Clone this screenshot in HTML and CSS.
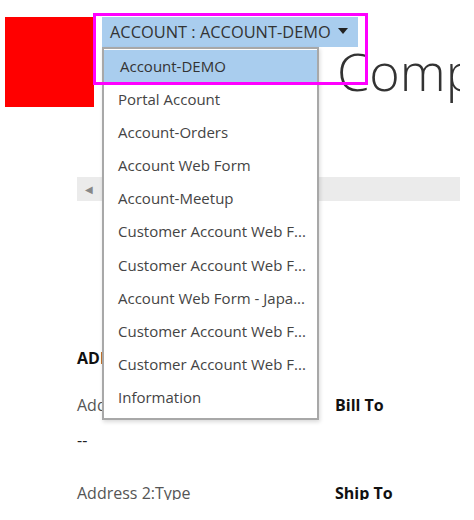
FILE: index.html
```html
<!DOCTYPE html>
<html lang="en">
<head>
    <meta charset="UTF-8">
    <meta name="viewport" content="width=device-width, initial-scale=1.0">
    <title>Account Form</title>
    <link rel="stylesheet" href="styles.css">
</head>
<body>
    <div class="page">
        <div class="header">
            <div class="logo"></div>
            <h1 class="title">Company</h1>
        </div>

        <div class="content">
            <div class="scroll-bar">
                <span class="scroll-arrow">&#9664;</span>
            </div>

            <h2 class="section-title">ADDRESSES</h2>

            <div class="field-grid">
                <div class="field-label">Address 1:Type</div>
                <div class="field-head">Bill To</div>
                <div class="field-value">--</div>
                <div></div>
                <div class="field-label">Address 2:Type</div>
                <div class="field-head">Ship To</div>
            </div>
        </div>

        <!-- form switcher -->
        <div class="form-switcher">
            ACCOUNT : ACCOUNT-DEMO <span class="caret"></span>
        </div>

        <ul class="form-menu">
            <li class="selected">Account-DEMO</li>
            <li>Portal Account</li>
            <li>Account-Orders</li>
            <li>Account Web Form</li>
            <li>Account-Meetup</li>
            <li>Customer Account Web F...</li>
            <li>Customer Account Web F...</li>
            <li>Account Web Form - Japa...</li>
            <li>Customer Account Web F...</li>
            <li>Customer Account Web F...</li>
            <li>Information</li>
        </ul>

        <div class="highlight-box"></div>
    </div>
</body>
</html>
```

FILE: styles.css
```css
* {
    margin: 0;
    padding: 0;
    box-sizing: border-box;
}

body {
    font-family: 'Open Sans', 'Noto Sans', sans-serif;
    background: white;
    color: #333;
}

.page {
    position: relative;
    width: 460px;
    height: 500px;
    overflow: hidden;
}

.header {
    display: flex;
    align-items: flex-start;
    padding: 17px 0 0 5px;
    height: 107px;
}

.logo {
    width: 89px;
    height: 90px;
    background: #ff0000;
    flex-shrink: 0;
}

.title {
    margin-left: 243px;
    margin-top: 28px;
    font-size: 52px;
    font-weight: 300;
    line-height: 52px;
    color: #333;
    white-space: nowrap;
}

.content {
    padding: 70px 0 0 77px;
}

.scroll-bar {
    height: 24px;
    background: #ebebeb;
    display: flex;
    align-items: center;
    padding-left: 8px;
}

.scroll-arrow {
    font-size: 10px;
    color: #888;
}

.section-title {
    margin-top: 146px;
    font-size: 16px;
    font-weight: 700;
    color: #111;
    line-height: 22px;
}

.field-grid {
    display: grid;
    grid-template-columns: 258px 1fr;
    margin-top: 25px;
    row-gap: 13px;
    font-size: 16px;
    line-height: 22px;
}

.field-label {
    color: #555;
}

.field-head {
    font-weight: 700;
    color: #111;
}

.field-value {
    color: #222;
    margin-bottom: 18px;
}

.form-switcher {
    position: absolute;
    top: 17px;
    left: 102px;
    width: 256px;
    height: 30px;
    background: #a9cdee;
    color: #333;
    font-size: 16.4px;
    line-height: 30px;
    padding-left: 8px;
    white-space: nowrap;
}

.caret {
    display: inline-block;
    margin-left: 3px;
    vertical-align: middle;
    border-left: 5px solid transparent;
    border-right: 5px solid transparent;
    border-top: 6px solid #222;
    position: relative;
    top: -3px;
}

.form-menu {
    position: absolute;
    top: 47px;
    left: 102px;
    width: 217px;
    list-style: none;
    background: white;
    border: 2px solid #a8a8a8;
    padding: 1px 0 4px;
    box-shadow: 1px 2px 4px rgba(0,0,0,0.15);
}

.form-menu li {
    height: 33.1px;
    line-height: 33px;
    padding-left: 14px;
    font-size: 15px;
    color: #444;
    white-space: nowrap;
    overflow: hidden;
}

.form-menu li.selected {
    background: #a9cdee;
    padding-left: 16px;
    color: #333;
}

.highlight-box {
    position: absolute;
    top: 13px;
    left: 93px;
    width: 275px;
    height: 72px;
    border: 3px solid #ff00ff;
}
```
